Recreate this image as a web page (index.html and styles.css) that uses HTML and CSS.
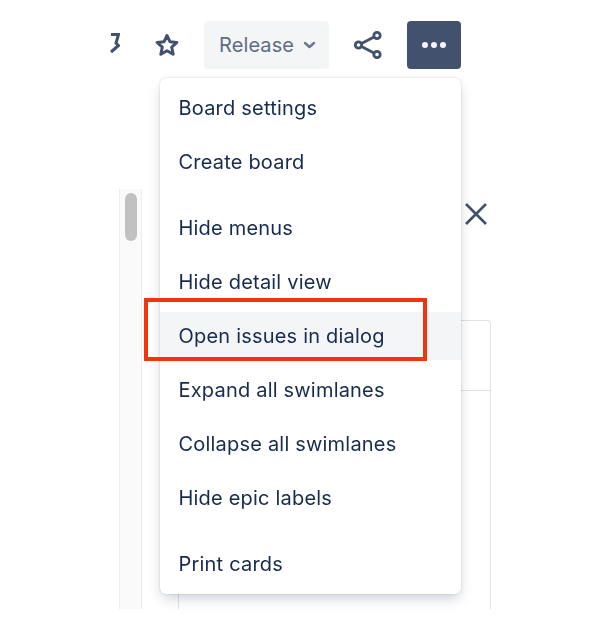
FILE: index.html
```html
<!DOCTYPE html>
<html lang="en">
<head>
<meta charset="utf-8">
<title>Board menu</title>
<link rel="stylesheet" href="styles.css">
</head>
<body>
<div class="page">
  <header class="toolbar">
    <svg class="icon-clipped" width="12" height="24" viewBox="0 0 12 24" fill="none" stroke="#42526e" stroke-width="3"><path d="M3 1.500h7.500L8 10l2.500 2.500L3 19"/></svg>
    <svg class="icon-star" width="24" height="24" viewBox="0 0 24 24" fill="none" stroke="#42526e" stroke-width="3" stroke-linejoin="round"><path d="M12 2.500l2.900 6.200 7 .8-5.200 4.700 1.500 7-6.200-3.500-6.200 3.500 1.500-7-5.200-4.700 7-.8z"/></svg>
    <button class="release">Release
      <svg width="13" height="8" viewBox="0 0 13 8" fill="none" stroke="#6b778c" stroke-width="2.400" stroke-linecap="round" stroke-linejoin="round"><path d="M2 2l4.500 4L11 2"/></svg>
    </button>
    <svg class="icon-share" width="28" height="28" viewBox="0 0 28 28" fill="none" stroke="#42526e" stroke-width="2.800"><circle cx="4.500" cy="14" r="3.200"/><circle cx="23" cy="4.500" r="3.200"/><circle cx="23" cy="23.500" r="3.200"/><path d="M7.500 12.400L20 6M7.500 15.600L20 22"/></svg>
    <button class="more" aria-label="More">
      <span class="dot"></span><span class="dot"></span><span class="dot"></span>
    </button>
  </header>
  <main class="workspace">
    <div class="track"><div class="thumb"></div></div>
    <section class="detail">
      <div class="detail-head">
        <svg width="24" height="24" viewBox="0 0 24 24" fill="none" stroke="#42526e" stroke-width="2.600"><path d="M2 2l20 20M22 2L2 22"/></svg>
      </div>
      <div class="panel"><div class="panel-head"></div></div>
    </section>
  </main>
  <nav class="menu">
    <ul class="group">
      <li class="item">Board settings</li>
      <li class="item">Create board</li>
    </ul>
    <ul class="group">
      <li class="item">Hide menus</li>
      <li class="item">Hide detail view</li>
      <li class="item item-hover">Open issues in dialog</li>
      <li class="item">Expand all swimlanes</li>
      <li class="item">Collapse all swimlanes</li>
      <li class="item">Hide epic labels</li>
    </ul>
    <ul class="group">
      <li class="item">Print cards</li>
    </ul>
  </nav>
  <div class="callout"></div>
</div>
</body>
</html>
```
FILE: styles.css
```css
* { box-sizing: border-box; }
html, body { margin: 0; background: #fff; }
.page {
  position: relative;
  width: 610px;
  height: 637px;
  overflow: hidden;
  font-family: Inter, "Liberation Sans", sans-serif;
  filter: blur(0.45px);
}
.toolbar {
  display: flex;
  align-items: center;
  height: 48px;
  padding-left: 108px;
  position: absolute;
  top: 21px;
  left: 0;
}
.icon-clipped { margin-right: 35px; }
.icon-star { margin-right: 25px; }
.release {
  display: flex;
  align-items: center;
  gap: 9px;
  width: 125px;
  height: 48px;
  padding: 0 0 0 15px;
  margin-right: 25px;
  border: 0;
  border-radius: 4px;
  background: #f4f5f7;
  color: #5e6c84;
  font: 20px Inter, "Liberation Sans", sans-serif;
  letter-spacing: 0.1px;
}
.icon-share { margin-right: 25px; }
.more {
  display: flex;
  align-items: center;
  justify-content: center;
  gap: 3px;
  width: 54px;
  height: 48px;
  padding: 0;
  border: 0;
  border-radius: 4px;
  background: #42526e;
}
.dot { width: 6px; height: 6px; border-radius: 50%; background: #f4f5f7; }
.workspace {
  display: flex;
  height: 609px;
  padding: 189px 0 0 119px;
}
.track {
  width: 23px;
  padding: 4px 0 0 5px;
  background: #fafafa;
  border-left: 1px solid #ececec;
  border-right: 1px solid #ececec;
}
.thumb { width: 12px; height: 48px; border-radius: 6px; background: #c1c1c1; }
.detail {
  display: flex;
  flex-direction: column;
  width: 313px;
  margin-left: 36px;
}
.detail-head {
  display: flex;
  justify-content: flex-end;
  height: 131px;
  padding: 13px 3px 0 0;
}
.panel {
  flex: 1;
  border: 1px solid #dfe1e6;
  border-bottom: 0;
  border-radius: 4px 4px 0 0;
}
.panel-head { height: 70px; border-bottom: 1px solid #dfe1e6; }
.menu {
  position: absolute;
  top: 78px;
  left: 160px;
  display: flex;
  flex-direction: column;
  gap: 18px;
  width: 301px;
  padding: 6px 0;
  border-radius: 6px;
  background: #fff;
  box-shadow: 0 6px 14px -3px rgba(9, 30, 66, 0.25), 0 0 2px rgba(9, 30, 66, 0.2);
}
.group {
  display: flex;
  flex-direction: column;
  gap: 6px;
  margin: 0;
  padding: 0;
  list-style: none;
}
.item {
  display: flex;
  align-items: center;
  height: 48px;
  padding-left: 18.500px;
  color: #172b4d;
  font-size: 20px;
  letter-spacing: 0.2px;
}
.item-hover { background: #f4f5f7; }
.callout {
  position: absolute;
  top: 298px;
  left: 144px;
  width: 283px;
  height: 63px;
  border: 4px solid #f5330f;
}
```
